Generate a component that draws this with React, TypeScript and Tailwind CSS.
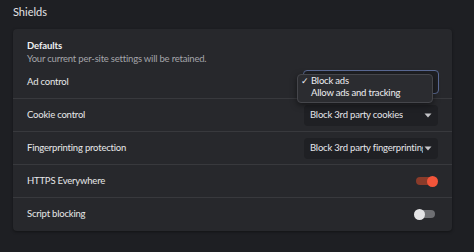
import React from "react";

const font = { fontFamily: "Lato, 'Open Sans', sans-serif" };

const Caret = () => (
  <svg width="8" height="5" viewBox="0 0 8 5" className="shrink-0">
    <path d="M0.5 0.5 L7.5 0.5 L4 4.5 Z" fill="#c4c4c8" />
  </svg>
);

interface SelectProps {
  value: string;
  focused?: boolean;
}

const Select: React.FC<SelectProps> = ({ value, focused = false }) => {
  if (focused) {
    return (
      <div className="relative w-[136px] h-[24px] rounded-[4px] border border-[#5a6a94] bg-[#1f2024]">
        <div className="absolute left-[-7px] top-[3px] w-[136px] h-[29px] rounded-[4px] border border-[#45464b] bg-[#2b2c30] shadow-[0_2px_6px_rgba(0,0,0,0.5)] flex flex-col justify-center pb-[3px] text-[9.5px] tracking-[-0.2px] leading-[12px] text-[#eeeef0]">
          <div className="flex items-center">
            <span className="w-[13px] pl-[3px] text-[9px]">✓</span>
            <span>Block ads</span>
          </div>
          <div className="flex items-center">
            <span className="w-[13px]" />
            <span>Allow ads and tracking</span>
          </div>
        </div>
      </div>
    );
  }
  return (
    <div className="w-[134px] h-[21px] rounded-[4px] bg-[#1f2024] flex items-center justify-between pl-[6px] pr-[6px] gap-[1px] text-[9.5px] tracking-[-0.2px] text-[#e6e6ea]">
      <span className="whitespace-nowrap overflow-hidden">{value}</span>
      <Caret />
    </div>
  );
};

const Toggle: React.FC<{ on: boolean }> = ({ on }) => (
  <div className="relative w-[22px] h-[11px] flex items-center">
    <div
      className={
        on
          ? "w-[20px] h-[8px] rounded-full bg-[#8a3b2a]"
          : "w-[20px] h-[8px] rounded-full bg-[#6e6f73] ml-[1px]"
      }
    />
    <div
      className={
        on
          ? "absolute right-0 top-0 w-[11px] h-[11px] rounded-full bg-[#f2553a]"
          : "absolute left-0 top-0 w-[11px] h-[11px] rounded-full bg-[#e4e4e6]"
      }
    />
  </div>
);

const Row: React.FC<{ label: string; border?: boolean; children?: React.ReactNode }> = ({
  label,
  border = true,
  children,
}) => (
  <div
    className={
      border
        ? "h-[33px] border-t border-[#38393d] flex items-center justify-between pl-[14px] pr-[14px]"
        : "h-[32px] flex items-center justify-between pl-[14px] pr-[13px]"
    }
  >
    <span className="text-[9.5px] tracking-[-0.2px] text-[#e8e8ea]">{label}</span>
    {children}
  </div>
);

export default function App() {
  return (
    <div className="w-[474px] h-[252px] bg-[#1e1f23] pl-[13px] pt-[5px] overflow-hidden" style={font}>
      <div className="text-[11px] leading-[14px] text-[#e4e4e6]">Shields</div>
      <div className="mt-[10px] w-[439px] rounded-[4px] bg-[#27282c] shadow-[0_1px_3px_rgba(0,0,0,0.4)] pt-[10px] pb-[1px]">
        <div className="pl-[14px]">
          <div className="text-[9.5px] tracking-[-0.1px] leading-[13px] font-bold text-[#f0f0f2]">Defaults</div>
          <div className="text-[9.5px] tracking-[-0.2px] leading-[14px] text-[#a4a5aa]">
            Your current per-site settings will be retained.
          </div>
        </div>
        <Row label="Ad control" border={false}>
          <Select value="Block ads" focused />
        </Row>
        <Row label="Cookie control">
          <Select value="Block 3rd party cookies" />
        </Row>
        <Row label="Fingerprinting protection">
          <Select value="Block 3rd party fingerprinting" />
        </Row>
        <Row label="HTTPS Everywhere">
          <Toggle on />
        </Row>
        <Row label="Script blocking">
          <div className="mr-[2px]">
            <Toggle on={false} />
          </div>
        </Row>
      </div>
    </div>
  );
}
